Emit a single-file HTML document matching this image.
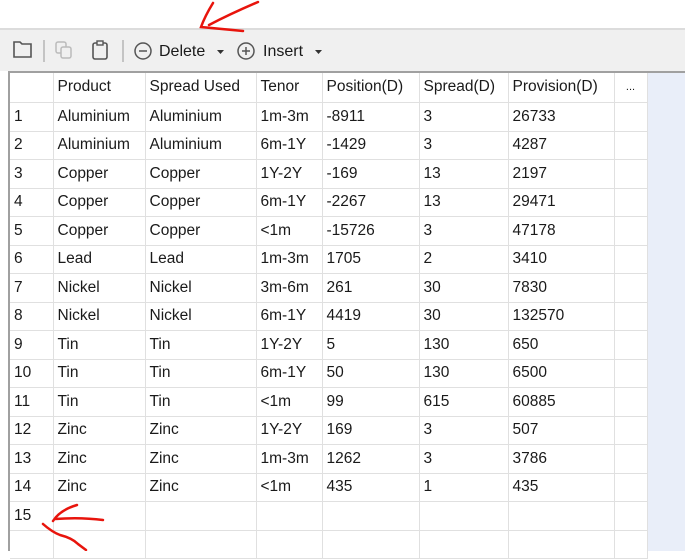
<!DOCTYPE html>
<html><head><style>
body{margin:0;width:685px;height:551px;overflow:hidden;background:#fff;font-family:"Liberation Sans",sans-serif;position:relative}
.tb{position:absolute;left:0;top:28px;width:685px;height:43px;background:#f0f0f0;border-top:2px solid #dcdcdc;box-sizing:border-box}
.grid{position:absolute;left:8px;top:71px;width:677px;height:480px;background:#e9eef9;border-top:2px solid #a0a0a0;border-left:2px solid #a0a0a0;box-sizing:border-box}
table{border-collapse:collapse;table-layout:fixed;position:absolute;left:0;top:0;background:#fff}
td{border:1.5px solid #e0e0e0;height:27px;padding:0 0 0 4px;font-size:15.5px;color:#1a1a1a;white-space:nowrap;overflow:hidden}
tr:nth-child(even) td{height:28px}
tr:first-child td{border-top:none}
td:first-child{border-left:none}
.tx{position:absolute;top:43px;font-size:16px;color:#1a1a1a}
</style></head><body>
<div class="tb"></div>
<svg style="position:absolute;left:0;top:28px" width="340" height="43">
<path d="M14 14h6l2 2h9v13h-17z" fill="none" stroke="#555" stroke-width="1.6"/>
<line x1="44" y1="12" x2="44" y2="34" stroke="#999"/>
<rect x="56" y="14" width="10" height="11" rx="2" fill="none" stroke="#bbb" stroke-width="1.5"/>
<rect x="61" y="19" width="10" height="11" rx="2" fill="#f0f0f0" stroke="#bbb" stroke-width="1.5"/>
<rect x="93" y="15" width="14" height="16" rx="2" fill="none" stroke="#555" stroke-width="1.6"/>
<rect x="97" y="13" width="6" height="4" fill="#f0f0f0" stroke="#555" stroke-width="1.4"/>
<line x1="123" y1="12" x2="123" y2="34" stroke="#999"/>
<circle cx="143" cy="23" r="8" fill="none" stroke="#555" stroke-width="1.5"/><line x1="139" y1="23" x2="147" y2="23" stroke="#555" stroke-width="1.5"/>
<path d="M217 22h7l-3.5 4z" fill="#333"/>
<circle cx="246" cy="23" r="8" fill="none" stroke="#555" stroke-width="1.5"/><path d="M242 23h8M246 19v8" stroke="#555" stroke-width="1.5"/>
<path d="M315 22h7l-3.5 4z" fill="#333"/>
</svg>
<div class="tx" style="left:159px">Delete</div>
<div class="tx" style="left:263px">Insert</div>
<div class="grid"><table>
<colgroup><col style="width:43px"><col style="width:92px"><col style="width:111px"><col style="width:66px"><col style="width:97px"><col style="width:89px"><col style="width:106px"><col style="width:33px"></colgroup>
<tr style="height:29px"><td></td><td>Product</td><td>Spread Used</td><td>Tenor</td><td>Position(D)</td><td>Spread(D)</td><td>Provision(D)</td><td style="text-align:center;padding:0;font-size:11px">...</td></tr>
<tr><td>1</td><td>Aluminium</td><td>Aluminium</td><td>1m-3m</td><td>-8911</td><td>3</td><td>26733</td><td></td></tr>
<tr><td>2</td><td>Aluminium</td><td>Aluminium</td><td>6m-1Y</td><td>-1429</td><td>3</td><td>4287</td><td></td></tr>
<tr><td>3</td><td>Copper</td><td>Copper</td><td>1Y-2Y</td><td>-169</td><td>13</td><td>2197</td><td></td></tr>
<tr><td>4</td><td>Copper</td><td>Copper</td><td>6m-1Y</td><td>-2267</td><td>13</td><td>29471</td><td></td></tr>
<tr><td>5</td><td>Copper</td><td>Copper</td><td>&lt;1m</td><td>-15726</td><td>3</td><td>47178</td><td></td></tr>
<tr><td>6</td><td>Lead</td><td>Lead</td><td>1m-3m</td><td>1705</td><td>2</td><td>3410</td><td></td></tr>
<tr><td>7</td><td>Nickel</td><td>Nickel</td><td>3m-6m</td><td>261</td><td>30</td><td>7830</td><td></td></tr>
<tr><td>8</td><td>Nickel</td><td>Nickel</td><td>6m-1Y</td><td>4419</td><td>30</td><td>132570</td><td></td></tr>
<tr><td>9</td><td>Tin</td><td>Tin</td><td>1Y-2Y</td><td>5</td><td>130</td><td>650</td><td></td></tr>
<tr><td>10</td><td>Tin</td><td>Tin</td><td>6m-1Y</td><td>50</td><td>130</td><td>6500</td><td></td></tr>
<tr><td>11</td><td>Tin</td><td>Tin</td><td>&lt;1m</td><td>99</td><td>615</td><td>60885</td><td></td></tr>
<tr><td>12</td><td>Zinc</td><td>Zinc</td><td>1Y-2Y</td><td>169</td><td>3</td><td>507</td><td></td></tr>
<tr><td>13</td><td>Zinc</td><td>Zinc</td><td>1m-3m</td><td>1262</td><td>3</td><td>3786</td><td></td></tr>
<tr><td>14</td><td>Zinc</td><td>Zinc</td><td>&lt;1m</td><td>435</td><td>1</td><td>435</td><td></td></tr>
<tr><td>15</td><td></td><td></td><td></td><td></td><td></td><td></td><td></td></tr>
<tr><td></td><td></td><td></td><td></td><td></td><td></td><td></td><td></td></tr>
</table></div>
<svg style="position:absolute;left:0;top:0" width="685" height="551">
<g fill="none" stroke="#e8140c" stroke-width="2.5" stroke-linecap="round">
<path d="M258 2Q230 14 209 25"/><path d="M213 3Q205 16 201 27L243 31"/>
<path d="M77 505Q60 510 53 521M55 519Q80 517 103 520"/>
<path d="M43 524Q52 532 60 535Q72 538 78 544L86 550"/>
</g></svg>
</body></html>
